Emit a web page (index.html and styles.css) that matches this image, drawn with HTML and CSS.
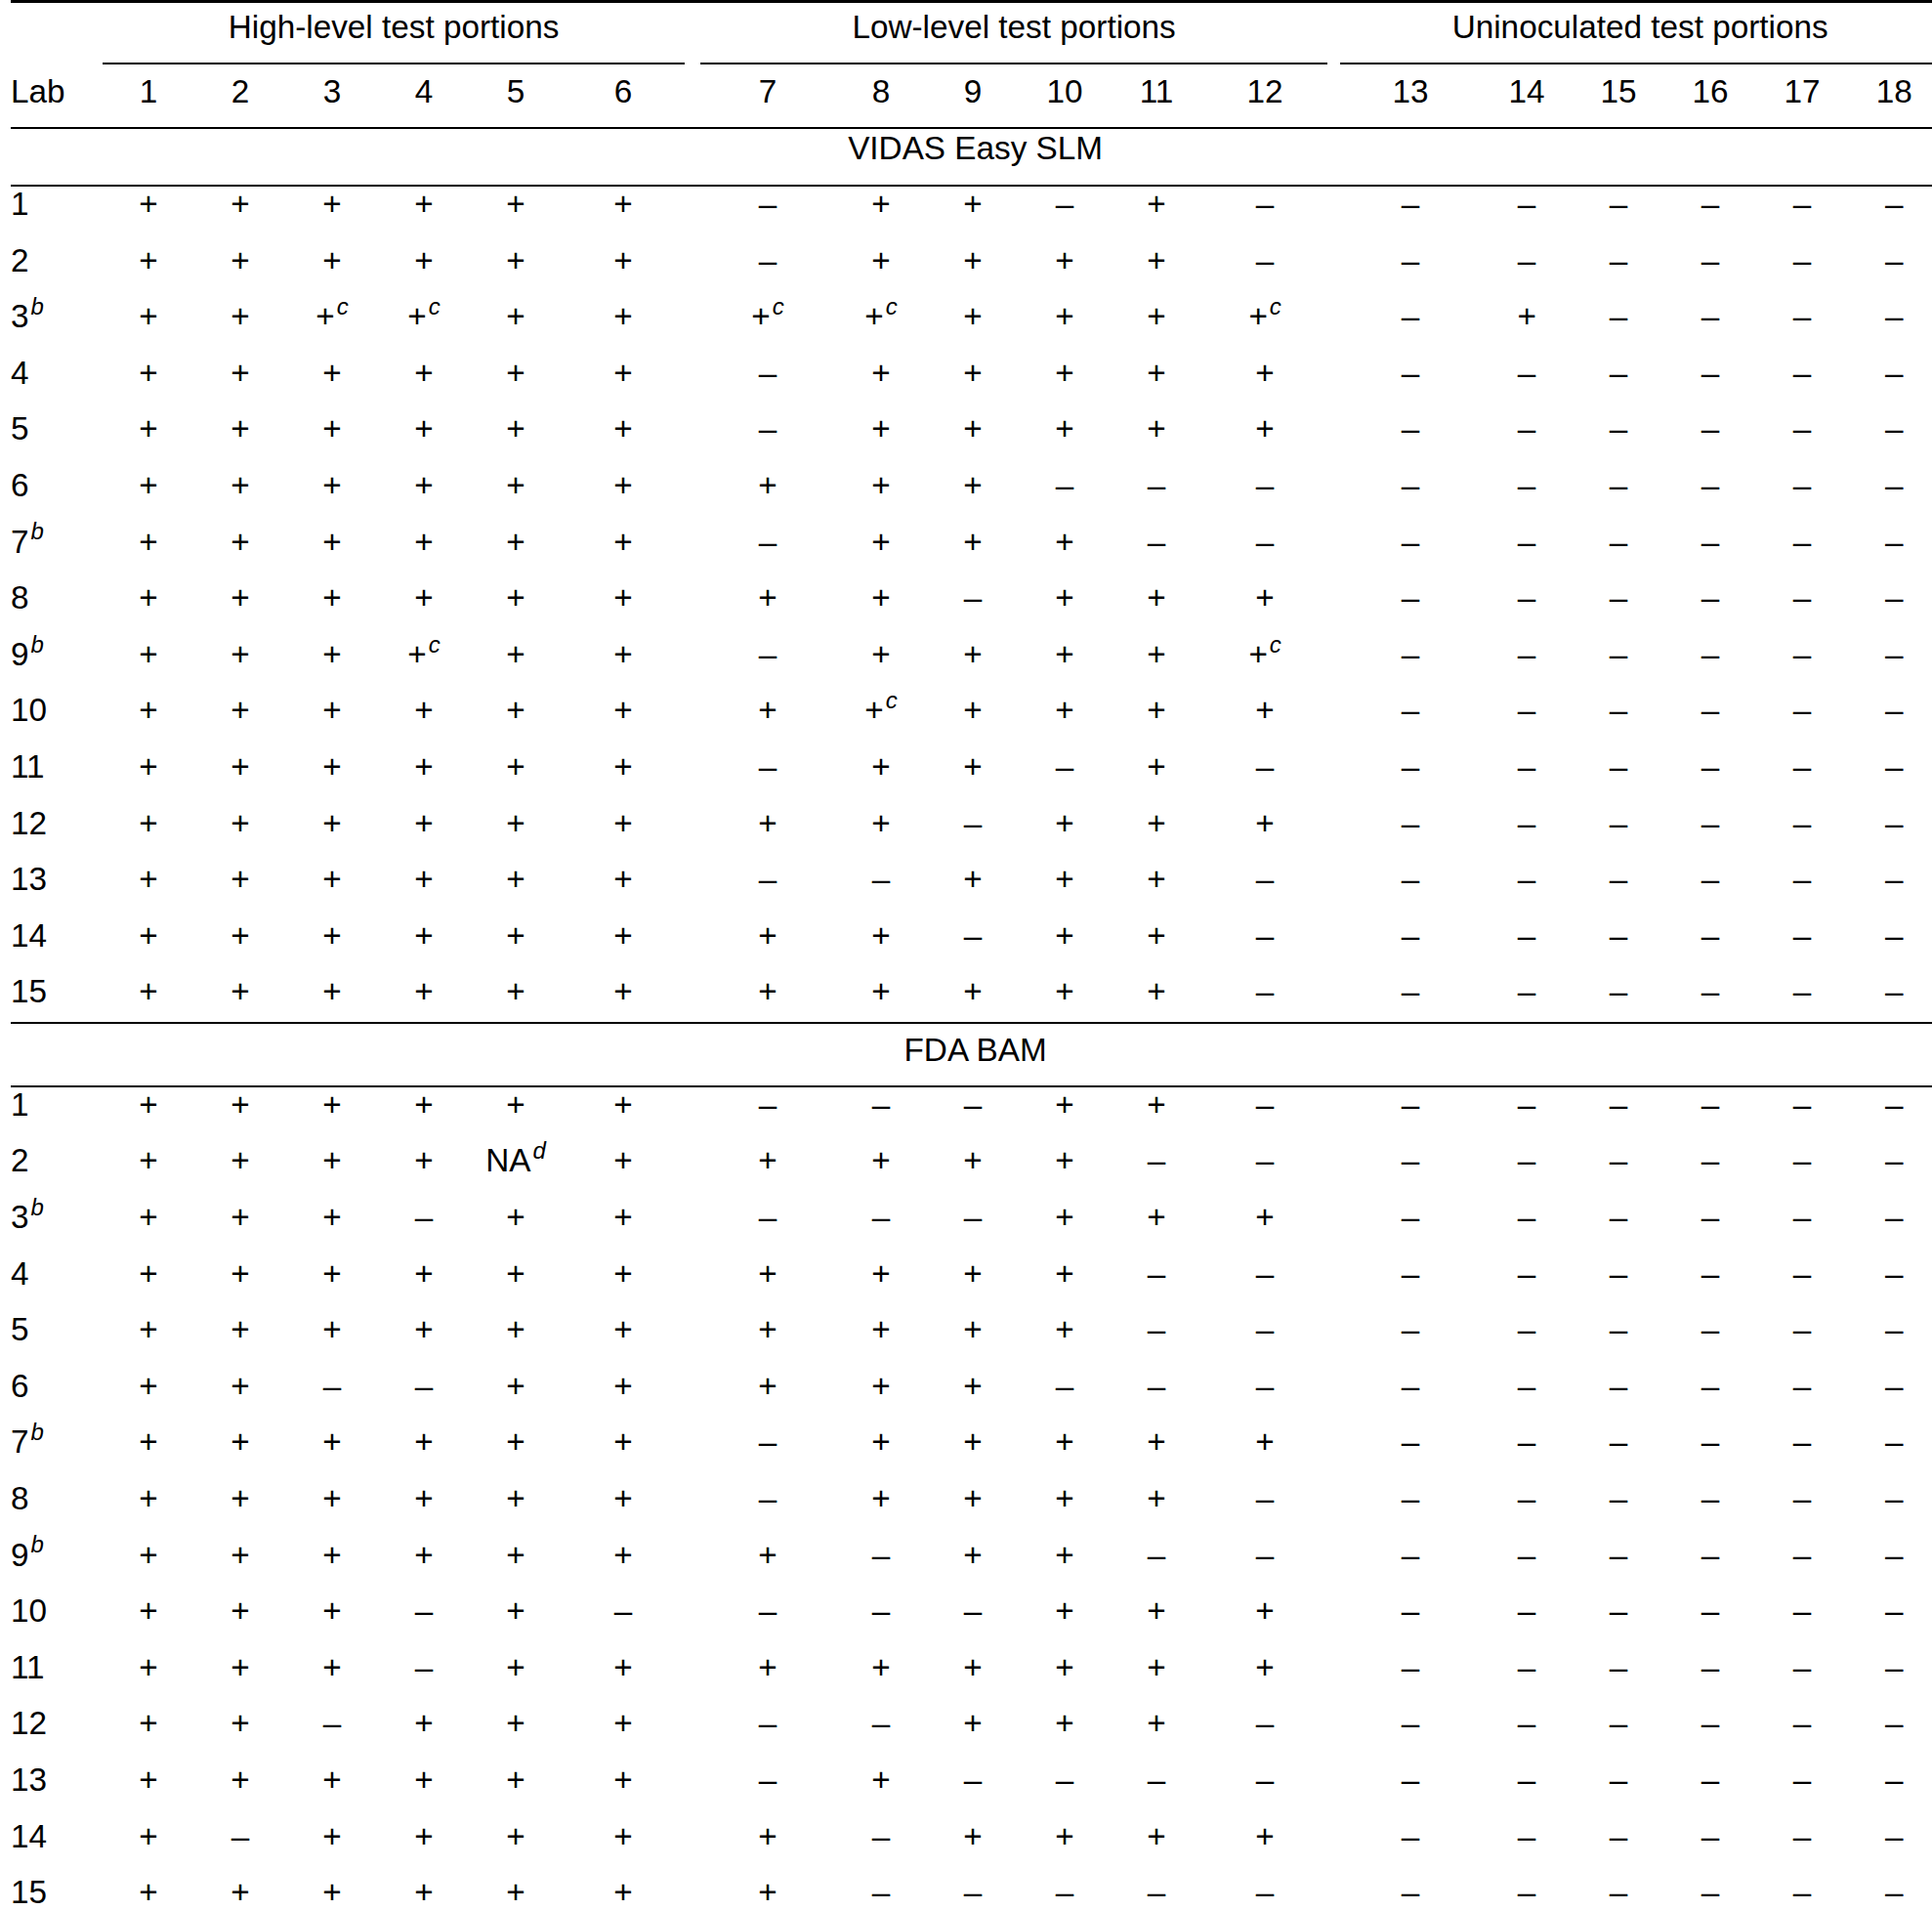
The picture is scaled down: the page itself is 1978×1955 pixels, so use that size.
FILE: index.html
```html
<!DOCTYPE html>
<html lang="en">
<head>
<meta charset="utf-8">
<title>Results by laboratory</title>
<link rel="stylesheet" href="styles.css">
</head>
<body>
<table class="results">
  <colgroup>
    <col class="w-lab">
    <col class="w-std"><col class="w-std"><col class="w-std"><col class="w-std"><col class="w-std"><col class="w-c6">
    <col class="w-g1">
    <col class="w-c7"><col class="w-std"><col class="w-std"><col class="w-std"><col class="w-std"><col class="w-c12">
    <col class="w-g2">
    <col class="w-c13"><col class="w-std"><col class="w-std"><col class="w-std"><col class="w-std"><col class="w-std">
  </colgroup>
  <thead>
    <tr class="grp-row">
      <th class="lab"></th>
      <th colspan="6" class="grp">High-level test portions</th>
      <th class="g"></th>
      <th colspan="6" class="grp">Low-level test portions</th>
      <th class="g"></th>
      <th colspan="6" class="grp">Uninoculated test portions</th>
    </tr>
    <tr class="num-row">
      <th class="lab">Lab</th>
      <th>1</th><th>2</th><th>3</th><th>4</th><th>5</th><th>6</th>
      <th class="g"></th>
      <th>7</th><th>8</th><th>9</th><th>10</th><th>11</th><th>12</th>
      <th class="g"></th>
      <th>13</th><th>14</th><th>15</th><th>16</th><th>17</th><th>18</th>
    </tr>
  </thead>
  <tbody class="block first">
    <tr class="section"><td colspan="21">VIDAS Easy SLM</td></tr>
    <tr><th class="lab">1</th><td>+</td><td>+</td><td>+</td><td>+</td><td>+</td><td>+</td><td class="g"></td><td>–</td><td>+</td><td>+</td><td>–</td><td>+</td><td>–</td><td class="g"></td><td>–</td><td>–</td><td>–</td><td>–</td><td>–</td><td>–</td></tr>
    <tr><th class="lab">2</th><td>+</td><td>+</td><td>+</td><td>+</td><td>+</td><td>+</td><td class="g"></td><td>–</td><td>+</td><td>+</td><td>+</td><td>+</td><td>–</td><td class="g"></td><td>–</td><td>–</td><td>–</td><td>–</td><td>–</td><td>–</td></tr>
    <tr><th class="lab">3<sup>b</sup></th><td>+</td><td>+</td><td>+<sup>c</sup></td><td>+<sup>c</sup></td><td>+</td><td>+</td><td class="g"></td><td>+<sup>c</sup></td><td>+<sup>c</sup></td><td>+</td><td>+</td><td>+</td><td>+<sup>c</sup></td><td class="g"></td><td>–</td><td>+</td><td>–</td><td>–</td><td>–</td><td>–</td></tr>
    <tr><th class="lab">4</th><td>+</td><td>+</td><td>+</td><td>+</td><td>+</td><td>+</td><td class="g"></td><td>–</td><td>+</td><td>+</td><td>+</td><td>+</td><td>+</td><td class="g"></td><td>–</td><td>–</td><td>–</td><td>–</td><td>–</td><td>–</td></tr>
    <tr><th class="lab">5</th><td>+</td><td>+</td><td>+</td><td>+</td><td>+</td><td>+</td><td class="g"></td><td>–</td><td>+</td><td>+</td><td>+</td><td>+</td><td>+</td><td class="g"></td><td>–</td><td>–</td><td>–</td><td>–</td><td>–</td><td>–</td></tr>
    <tr><th class="lab">6</th><td>+</td><td>+</td><td>+</td><td>+</td><td>+</td><td>+</td><td class="g"></td><td>+</td><td>+</td><td>+</td><td>–</td><td>–</td><td>–</td><td class="g"></td><td>–</td><td>–</td><td>–</td><td>–</td><td>–</td><td>–</td></tr>
    <tr><th class="lab">7<sup>b</sup></th><td>+</td><td>+</td><td>+</td><td>+</td><td>+</td><td>+</td><td class="g"></td><td>–</td><td>+</td><td>+</td><td>+</td><td>–</td><td>–</td><td class="g"></td><td>–</td><td>–</td><td>–</td><td>–</td><td>–</td><td>–</td></tr>
    <tr><th class="lab">8</th><td>+</td><td>+</td><td>+</td><td>+</td><td>+</td><td>+</td><td class="g"></td><td>+</td><td>+</td><td>–</td><td>+</td><td>+</td><td>+</td><td class="g"></td><td>–</td><td>–</td><td>–</td><td>–</td><td>–</td><td>–</td></tr>
    <tr><th class="lab">9<sup>b</sup></th><td>+</td><td>+</td><td>+</td><td>+<sup>c</sup></td><td>+</td><td>+</td><td class="g"></td><td>–</td><td>+</td><td>+</td><td>+</td><td>+</td><td>+<sup>c</sup></td><td class="g"></td><td>–</td><td>–</td><td>–</td><td>–</td><td>–</td><td>–</td></tr>
    <tr><th class="lab">10</th><td>+</td><td>+</td><td>+</td><td>+</td><td>+</td><td>+</td><td class="g"></td><td>+</td><td>+<sup>c</sup></td><td>+</td><td>+</td><td>+</td><td>+</td><td class="g"></td><td>–</td><td>–</td><td>–</td><td>–</td><td>–</td><td>–</td></tr>
    <tr><th class="lab">11</th><td>+</td><td>+</td><td>+</td><td>+</td><td>+</td><td>+</td><td class="g"></td><td>–</td><td>+</td><td>+</td><td>–</td><td>+</td><td>–</td><td class="g"></td><td>–</td><td>–</td><td>–</td><td>–</td><td>–</td><td>–</td></tr>
    <tr><th class="lab">12</th><td>+</td><td>+</td><td>+</td><td>+</td><td>+</td><td>+</td><td class="g"></td><td>+</td><td>+</td><td>–</td><td>+</td><td>+</td><td>+</td><td class="g"></td><td>–</td><td>–</td><td>–</td><td>–</td><td>–</td><td>–</td></tr>
    <tr><th class="lab">13</th><td>+</td><td>+</td><td>+</td><td>+</td><td>+</td><td>+</td><td class="g"></td><td>–</td><td>–</td><td>+</td><td>+</td><td>+</td><td>–</td><td class="g"></td><td>–</td><td>–</td><td>–</td><td>–</td><td>–</td><td>–</td></tr>
    <tr><th class="lab">14</th><td>+</td><td>+</td><td>+</td><td>+</td><td>+</td><td>+</td><td class="g"></td><td>+</td><td>+</td><td>–</td><td>+</td><td>+</td><td>–</td><td class="g"></td><td>–</td><td>–</td><td>–</td><td>–</td><td>–</td><td>–</td></tr>
    <tr><th class="lab">15</th><td>+</td><td>+</td><td>+</td><td>+</td><td>+</td><td>+</td><td class="g"></td><td>+</td><td>+</td><td>+</td><td>+</td><td>+</td><td>–</td><td class="g"></td><td>–</td><td>–</td><td>–</td><td>–</td><td>–</td><td>–</td></tr>
  </tbody>
  <tbody class="block second">
    <tr class="section"><td colspan="21">FDA BAM</td></tr>
    <tr><th class="lab">1</th><td>+</td><td>+</td><td>+</td><td>+</td><td>+</td><td>+</td><td class="g"></td><td>–</td><td>–</td><td>–</td><td>+</td><td>+</td><td>–</td><td class="g"></td><td>–</td><td>–</td><td>–</td><td>–</td><td>–</td><td>–</td></tr>
    <tr><th class="lab">2</th><td>+</td><td>+</td><td>+</td><td>+</td><td>NA<sup>d</sup></td><td>+</td><td class="g"></td><td>+</td><td>+</td><td>+</td><td>+</td><td>–</td><td>–</td><td class="g"></td><td>–</td><td>–</td><td>–</td><td>–</td><td>–</td><td>–</td></tr>
    <tr><th class="lab">3<sup>b</sup></th><td>+</td><td>+</td><td>+</td><td>–</td><td>+</td><td>+</td><td class="g"></td><td>–</td><td>–</td><td>–</td><td>+</td><td>+</td><td>+</td><td class="g"></td><td>–</td><td>–</td><td>–</td><td>–</td><td>–</td><td>–</td></tr>
    <tr><th class="lab">4</th><td>+</td><td>+</td><td>+</td><td>+</td><td>+</td><td>+</td><td class="g"></td><td>+</td><td>+</td><td>+</td><td>+</td><td>–</td><td>–</td><td class="g"></td><td>–</td><td>–</td><td>–</td><td>–</td><td>–</td><td>–</td></tr>
    <tr><th class="lab">5</th><td>+</td><td>+</td><td>+</td><td>+</td><td>+</td><td>+</td><td class="g"></td><td>+</td><td>+</td><td>+</td><td>+</td><td>–</td><td>–</td><td class="g"></td><td>–</td><td>–</td><td>–</td><td>–</td><td>–</td><td>–</td></tr>
    <tr><th class="lab">6</th><td>+</td><td>+</td><td>–</td><td>–</td><td>+</td><td>+</td><td class="g"></td><td>+</td><td>+</td><td>+</td><td>–</td><td>–</td><td>–</td><td class="g"></td><td>–</td><td>–</td><td>–</td><td>–</td><td>–</td><td>–</td></tr>
    <tr><th class="lab">7<sup>b</sup></th><td>+</td><td>+</td><td>+</td><td>+</td><td>+</td><td>+</td><td class="g"></td><td>–</td><td>+</td><td>+</td><td>+</td><td>+</td><td>+</td><td class="g"></td><td>–</td><td>–</td><td>–</td><td>–</td><td>–</td><td>–</td></tr>
    <tr><th class="lab">8</th><td>+</td><td>+</td><td>+</td><td>+</td><td>+</td><td>+</td><td class="g"></td><td>–</td><td>+</td><td>+</td><td>+</td><td>+</td><td>–</td><td class="g"></td><td>–</td><td>–</td><td>–</td><td>–</td><td>–</td><td>–</td></tr>
    <tr><th class="lab">9<sup>b</sup></th><td>+</td><td>+</td><td>+</td><td>+</td><td>+</td><td>+</td><td class="g"></td><td>+</td><td>–</td><td>+</td><td>+</td><td>–</td><td>–</td><td class="g"></td><td>–</td><td>–</td><td>–</td><td>–</td><td>–</td><td>–</td></tr>
    <tr><th class="lab">10</th><td>+</td><td>+</td><td>+</td><td>–</td><td>+</td><td>–</td><td class="g"></td><td>–</td><td>–</td><td>–</td><td>+</td><td>+</td><td>+</td><td class="g"></td><td>–</td><td>–</td><td>–</td><td>–</td><td>–</td><td>–</td></tr>
    <tr><th class="lab">11</th><td>+</td><td>+</td><td>+</td><td>–</td><td>+</td><td>+</td><td class="g"></td><td>+</td><td>+</td><td>+</td><td>+</td><td>+</td><td>+</td><td class="g"></td><td>–</td><td>–</td><td>–</td><td>–</td><td>–</td><td>–</td></tr>
    <tr><th class="lab">12</th><td>+</td><td>+</td><td>–</td><td>+</td><td>+</td><td>+</td><td class="g"></td><td>–</td><td>–</td><td>+</td><td>+</td><td>+</td><td>–</td><td class="g"></td><td>–</td><td>–</td><td>–</td><td>–</td><td>–</td><td>–</td></tr>
    <tr><th class="lab">13</th><td>+</td><td>+</td><td>+</td><td>+</td><td>+</td><td>+</td><td class="g"></td><td>–</td><td>+</td><td>–</td><td>–</td><td>–</td><td>–</td><td class="g"></td><td>–</td><td>–</td><td>–</td><td>–</td><td>–</td><td>–</td></tr>
    <tr><th class="lab">14</th><td>+</td><td>–</td><td>+</td><td>+</td><td>+</td><td>+</td><td class="g"></td><td>+</td><td>–</td><td>+</td><td>+</td><td>+</td><td>+</td><td class="g"></td><td>–</td><td>–</td><td>–</td><td>–</td><td>–</td><td>–</td></tr>
    <tr><th class="lab">15</th><td>+</td><td>+</td><td>+</td><td>+</td><td>+</td><td>+</td><td class="g"></td><td>+</td><td>–</td><td>–</td><td>–</td><td>–</td><td>–</td><td class="g"></td><td>–</td><td>–</td><td>–</td><td>–</td><td>–</td><td>–</td></tr>
  </tbody>
</table>
</body>
</html>
```
FILE: styles.css
```css
html, body {
  margin: 0;
  padding: 0;
  background: #fff;
  overflow: hidden;
}

body {
  font-family: "Liberation Sans", Arial, sans-serif;
  font-size: 33.3px;
  color: #000;
}

.results {
  margin-left: 11px;
  width: 1975px;
  table-layout: fixed;
  border-collapse: separate;
  border-spacing: 0;
  border-top: 3px solid #000;
}

.w-lab { width: 94px; }
.w-std { width: 94px; }
.w-c6  { width: 126px; }
.w-g1  { width: 16px; }
.w-c7  { width: 138px; }
.w-c12 { width: 128px; }
.w-g2  { width: 13px; }
.w-c13 { width: 144px; }

.results th,
.results td {
  padding: 0;
  font-weight: normal;
  text-align: center;
  vertical-align: top;
  line-height: 36px;
  white-space: nowrap;
}

.results .lab {
  text-align: left;
}

/* header: group titles with underline */
.grp-row th {
  padding-top: 7px;
  padding-bottom: 18px;
}

.grp-row .grp {
  border-bottom: 2px solid #000;
}

/* header: column numbers */
.num-row th {
  padding-top: 10px;
  padding-bottom: 18px;
  border-bottom: 2px solid #000;
}

/* section title rows */
.section td {
  border-bottom: 2px solid #000;
  padding-bottom: 19.5px;
}

.first .section td {
  padding-top: 1.5px;
}

.second .section td {
  border-top: 2px solid #000;
  padding-top: 8.5px;
  padding-bottom: 18px;
}

/* data rows */
.block tr:not(.section) > * {
  padding-bottom: 21.6px;
}

.first tr:last-child > * {
  padding-bottom: 13px;
}

sup {
  font-size: 0.72em;
  font-style: italic;
  line-height: 0;
  vertical-align: 0.55em;
  margin-left: 2px;
}
```
